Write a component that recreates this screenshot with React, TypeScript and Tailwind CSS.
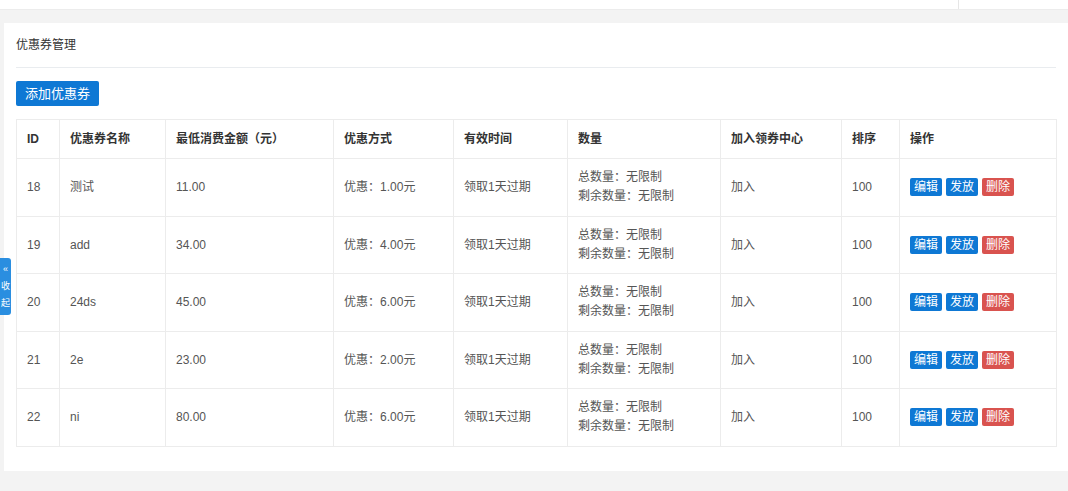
import React from "react";

const rows = [
	{ id: 18, name: "测试", min: "11.00", off: "1.00" },
	{ id: 19, name: "add", min: "34.00", off: "4.00" },
	{ id: 20, name: "24ds", min: "45.00", off: "6.00" },
	{ id: 21, name: "2e", min: "23.00", off: "2.00" },
	{ id: 22, name: "ni", min: "80.00", off: "6.00" },
];

const cols = [
	{ title: "ID", w: "w-[43px]" },
	{ title: "优惠券名称", w: "w-[106px]" },
	{ title: "最低消费金额（元）", w: "w-[168px]" },
	{ title: "优惠方式", w: "w-[120px]" },
	{ title: "有效时间", w: "w-[114px]" },
	{ title: "数量", w: "w-[153px]" },
	{ title: "加入领券中心", w: "w-[121px]" },
	{ title: "排序", w: "w-[58px]" },
	{ title: "操作", w: "" },
];

const App = () => {
	return (
		<div
			className="relative min-h-[491px] w-[1068px] overflow-hidden bg-[#f3f3f3] text-xs text-[#555]"
			style={{ fontFamily: '"Liberation Sans", "Noto Sans CJK SC", sans-serif' }}
		>
			{/* top bar */}
			<div className="flex h-[10px] border-b border-[#ececec] bg-white">
				<div className="ml-auto mr-[109px] h-full border-l border-[#e6e6e6]" />
			</div>

			<div className="mt-[13px] ml-[4px] h-[448px] bg-white px-[12px]">
				<div className="pt-[14px] pb-[14px] text-xs text-[#333]">优惠券管理</div>
				<div className="border-t border-[#e9ecef]" />

				<button className="mt-[13px] h-[25px] w-[83px] rounded-[2px] bg-[#0e78d4] text-[13px] text-white">
					添加优惠券
				</button>

				<table className="mt-[13px] w-[1041px] table-fixed border-collapse border border-[#ececec]">
					<thead>
						<tr className="h-[39px]">
							{cols.map((c) => (
								<th
									key={c.title}
									className={`${c.w} border border-[#ececec] px-[10px] text-left text-xs font-bold text-[#333]`}
								>
									{c.title}
								</th>
							))}
						</tr>
					</thead>
					<tbody>
						{rows.map((r) => (
							<tr key={r.id} className="h-[57.5px]">
								<td className="border border-[#ececec] px-[10px]">{r.id}</td>
								<td className="border border-[#ececec] px-[10px]">{r.name}</td>
								<td className="border border-[#ececec] px-[10px]">{r.min}</td>
								<td className="border border-[#ececec] px-[10px]">优惠：{r.off}元</td>
								<td className="border border-[#ececec] px-[10px]">领取1天过期</td>
								<td className="border border-[#ececec] px-[10px] leading-[19px]">
									<div>总数量：无限制</div>
									<div>剩余数量：无限制</div>
								</td>
								<td className="border border-[#ececec] px-[10px]">加入</td>
								<td className="border border-[#ececec] px-[10px]">100</td>
								<td className="border border-[#ececec] px-[10px]">
									<div className="flex gap-[4px]">
										<span className="flex h-[18px] w-[32px] items-center justify-center rounded-[2px] bg-[#0e78d4] text-white">
											编辑
										</span>
										<span className="flex h-[18px] w-[32px] items-center justify-center rounded-[2px] bg-[#0e78d4] text-white">
											发放
										</span>
										<span className="flex h-[18px] w-[32px] items-center justify-center rounded-[2px] bg-[#d9534f] text-white">
											删除
										</span>
									</div>
								</td>
							</tr>
						))}
					</tbody>
				</table>
			</div>

			{/* collapse tab at the left edge */}
			<div className="absolute left-0 top-[258px] flex h-[57px] w-[11px] flex-col items-center justify-center rounded-r-[3px] bg-[#2a8ee0] text-[9px] leading-[17px] text-white">
				<span>«</span>
				<span>收</span>
				<span>起</span>
			</div>
		</div>
	);
};

export default App;
